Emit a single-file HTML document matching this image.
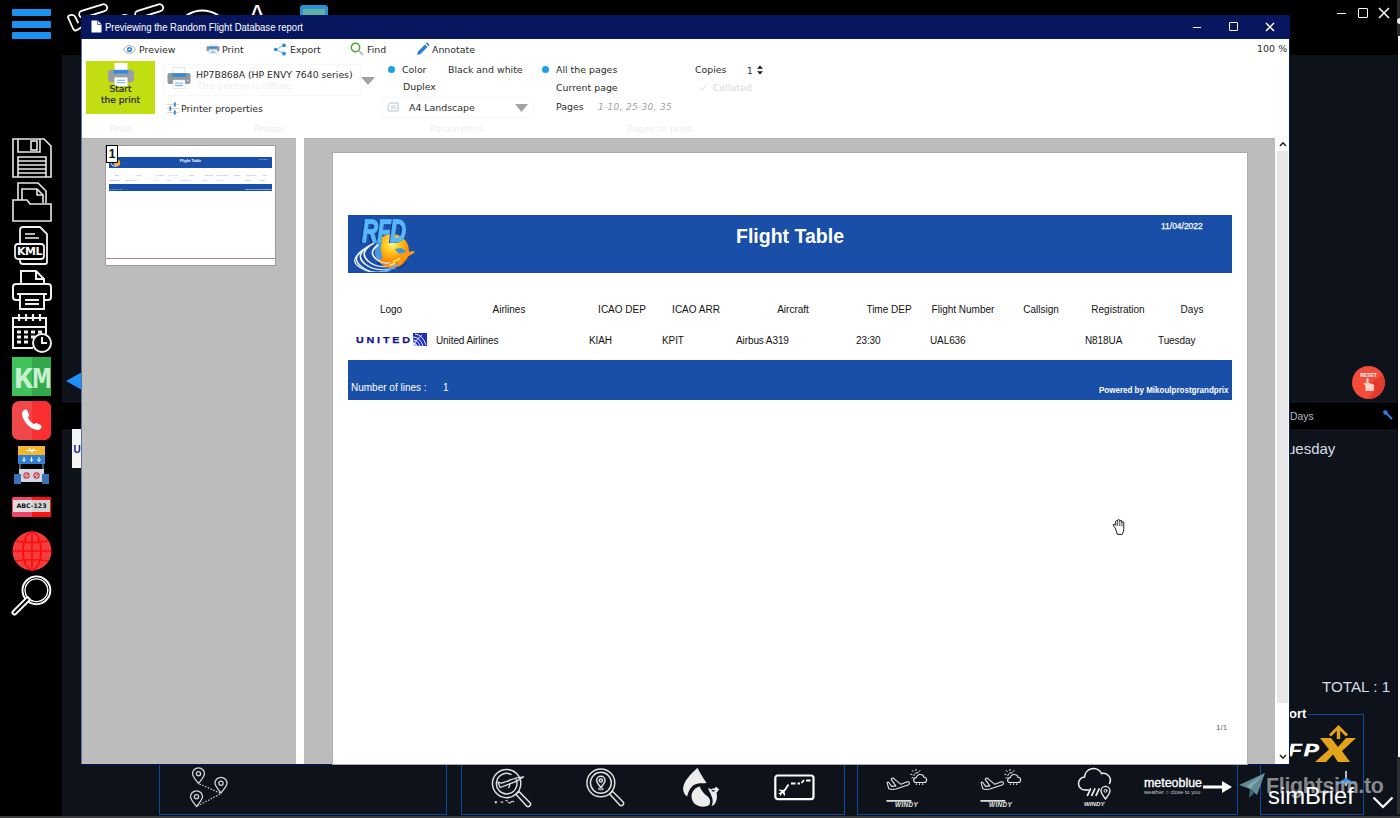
<!DOCTYPE html>
<html><head><meta charset="utf-8"><title>Previewing the Random Flight Database report</title>
<style>
*{margin:0;padding:0;box-sizing:border-box}
html,body{width:1400px;height:818px;overflow:hidden;background:#000}
body{position:relative;font-family:"Liberation Sans",sans-serif}
.abs,#app div,#app span,#app svg{position:absolute}
#app{position:absolute;left:0;top:0;width:1400px;height:818px;overflow:hidden;background:#000}
.navy{background:#0e121b}
.dv{margin-top:1px;font-family:"DejaVu Sans","Liberation Sans",sans-serif;font-size:9.400px;color:#2c2c2c;white-space:nowrap;line-height:12px}
.ar{font-family:"Liberation Sans",sans-serif;font-size:10px;color:#111;white-space:nowrap;line-height:12px}
.hd{top:151px;transform:translateX(-50%)}
.dt{top:182px;font-size:10px;letter-spacing:-.1px}
.gl{top:107px;color:#eee}
.dot{width:7px;height:7px;border-radius:50%;background:#1b9fe6}
.windy{font:italic bold 6.400px/8px "Liberation Sans",sans-serif;color:#e8e8e8;letter-spacing:.35px}
.grp{border:1px solid #0f4a9c;border-top:none}
</style></head><body><div id="app">
<!-- main dark area -->
<div class="navy" style="left:62px;top:55px;width:1338px;height:763px"></div>
<div style="left:0;top:816px;width:1400px;height:2px;background:#3c3c3c"></div>
<!-- ===== SIDEBAR ===== -->
<div style="left:12px;top:9px;width:39px;height:7px;background:#1e90f0;border-radius:1px"></div>
<div style="left:12px;top:21px;width:39px;height:7px;background:#1e90f0;border-radius:1px"></div>
<div style="left:12px;top:32px;width:39px;height:7px;background:#1e90f0;border-radius:1px"></div>
<!-- floppy -->
<svg style="left:12px;top:138px" width="40" height="40" viewBox="0 0 40 40" fill="none" stroke="#e8e8e8" stroke-width="1.6"><path d="M1 1h31l7 7v31H1z"/><path d="M6 1v13h22V1"/><rect x="19" y="3" width="6" height="9"/><path d="M6 39V19h28v20M6 23h28M6 27h28M6 31h28M6 35h28"/></svg>
<!-- folder -->
<svg style="left:12px;top:182px" width="40" height="40" viewBox="0 0 40 40" fill="none" stroke="#e8e8e8" stroke-width="1.6"><path d="M6 18V1h20l8 8v12"/><path d="M10 18V7h15l6 6v8"/><path d="M25 7v6h6"/><path d="M1 18h14l3 4h21v17H1z"/></svg>
<!-- KML -->
<svg style="left:14px;top:226px" width="36" height="39" viewBox="0 0 36 39" fill="none" stroke="#f0f0f0" stroke-width="1.8"><path d="M6 17V4q0-3 3-3h17l7 7v28q0 2-2 2H9q-3 0-3-3v-3"/><path d="M11 8h10M11 12h14" stroke-width="1.4"/><rect x="1" y="18" width="29" height="15" rx="3"/></svg>
<span style="left:17px;top:246px;font:bold 11px/12px 'DejaVu Sans','Liberation Sans',sans-serif;color:#fff;letter-spacing:-.5px" id="kml">KML</span>
<!-- printer -->
<svg style="left:12px;top:270px" width="40" height="40" viewBox="0 0 40 40" fill="none" stroke="#f0f0f0" stroke-width="2"><path d="M9 14V1h15l8 8v5"/><path d="M24 1v8h8"/><path d="M8 30H4q-3 0-3-3V17q0-3 3-3h32q3 0 3 3v10q0 3-3 3h-4"/><path d="M8 24h24v15H8zM5 24h30M13 30h14M13 34h14"/></svg>
<!-- calendar -->
<svg style="left:12px;top:313px" width="40" height="40" viewBox="0 0 40 40" fill="none" stroke="#f0f0f0" stroke-width="2"><path d="M1 5h33v9H1zM1 14v21h20M34 14v8"/><path d="M7 1v7M14 1v7M21 1v7M28 1v7" stroke-width="2.2"/><path d="M5 19h4M12 19h4M19 19h4M26 19h4M5 24h4M12 24h4M19 24h4M5 29h4M12 29h4" stroke-width="3"/><circle cx="30" cy="30" r="9" fill="#000"/><path d="M30 24v6h5"/></svg>
<!-- KM green -->
<div style="left:12px;top:357px;width:39px;height:39px;background:#3fc25a"></div>
<div style="left:32px;top:357px;width:19px;height:39px;background:#33a84b"></div>
<span id="km" style="left:14px;top:362px;font:bold 29.700px/36px 'Liberation Mono','Liberation Sans',monospace;color:#c6f0cf;letter-spacing:-1px;transform:scaleX(1.080);transform-origin:0 0;white-space:nowrap">KM</span>
<!-- phone -->
<div style="left:12px;top:401px;width:39px;height:39px;background:#f0484a;border-radius:7px"></div>
<div style="left:32px;top:401px;width:19px;height:39px;background:#fa2f2f;border-radius:0 7px 7px 0"></div>
<svg style="left:19px;top:408px" width="25" height="25" viewBox="0 0 25 25"><path d="M5 2c1.500-1 3-.5 3.500.8l1.500 4c.3 1-.2 1.800-1.200 2.500 1 3 3.500 5.500 6.500 7 .8-1 1.800-1.500 2.800-1l3.500 1.800c1.200.6 1.200 2 .4 3.200-1.500 2.200-4 2.200-7 1C9 18.500 4.500 13 3.200 7.500 2.700 5 3.500 3 5 2z" fill="#fff"/></svg>
<!-- gate -->
<div style="left:18px;top:446px;width:27px;height:9px;background:#f3b72e"></div>
<div style="left:18px;top:455px;width:27px;height:9px;background:#2f7fd3"></div>
<div style="left:19px;top:464px;width:2px;height:8px;background:#4a5568"></div><div style="left:42px;top:464px;width:2px;height:8px;background:#4a5568"></div>
<div style="left:19px;top:469px;width:25px;height:13px;background:#cfd8e3"></div>
<div style="left:14px;top:474px;width:7px;height:10px;background:#3a72b8"></div><div style="left:42px;top:474px;width:7px;height:10px;background:#3a72b8"></div>
<svg style="left:18px;top:446px" width="27" height="38" viewBox="0 0 27 38"><path d="M8 4.500h11M11 2l4 4.500M16 3l-3 3" stroke="#fff" stroke-width="1.100" fill="none"/><path d="M6 11v4M13.500 11v4M21 11v4M4.500 13.500l1.500 2 1.500-2M12 13.500l1.500 2 1.500-2M19.500 13.500l1.500 2 1.500-2" stroke="#fff" stroke-width="1" fill="none"/><circle cx="8.500" cy="29.500" r="2.600" fill="none" stroke="#e0343a" stroke-width="1.200"/><circle cx="18.500" cy="29.500" r="2.600" fill="none" stroke="#e0343a" stroke-width="1.200"/><path d="M6.800 31.200l3.400-3.400M16.800 31.200l3.400-3.400" stroke="#e0343a" stroke-width="1"/></svg>
<!-- ABC-123 -->
<div style="left:12px;top:497px;width:39px;height:20px;background:#f2456c;border-radius:1.500px"></div>
<div style="left:32px;top:497px;width:19px;height:20px;background:#ff1212;border-radius:0 1.500px 1.500px 0"></div>
<div style="left:13px;top:500px;width:37px;height:12px;background:#dedede"></div>
<div style="left:32px;top:500px;width:18px;height:12px;background:#d2d2d2"></div>
<span style="left:12px;top:500px;width:39px;text-align:center;font:bold 6.300px/12px 'DejaVu Sans','Liberation Sans',sans-serif;color:#111">ABC-123</span>
<!-- globe -->
<svg style="left:12px;top:531px" width="40" height="40" viewBox="0 0 40 40"><circle cx="20" cy="20" r="19.500" fill="#f33c3c"/><g fill="none" stroke="#ff0d0d" stroke-width="1.700"><ellipse cx="20" cy="20" rx="9" ry="19"/><path d="M20 1v38M1 20h38M4 10q16 3 32 0M4 30q16-3 32 0"/></g></svg>
<!-- magnifier -->
<svg style="left:11px;top:574px" width="42" height="42" viewBox="0 0 42 42" fill="none"><circle cx="25.400" cy="16.300" r="12.800" stroke="#fff" stroke-width="4.200"/><circle cx="25.400" cy="16.300" r="12.600" stroke="#000" stroke-width="1"/><path d="M16.500 25.500L3.500 38.500" stroke="#fff" stroke-width="6" stroke-linecap="round"/><path d="M16.500 25.500L3.500 38.500" stroke="#000" stroke-width="2" stroke-linecap="round"/></svg>
<!-- ===== UNDERLAY APP ===== -->
<!-- top toolbar icons (peeking above dialog) -->
<svg style="left:62px;top:0px" width="170" height="40" viewBox="0 0 170 40" fill="none" stroke="#fff" stroke-width="1.800" stroke-linecap="round" stroke-linejoin="round"><g transform="rotate(-17 31 10.500)"><rect x="16.500" y="7.500" width="29" height="7" rx="3.500"/></g><path d="M7 15.500q4-1.500 6 1l3 6M7 15.500q-1.500 1-.5 3l4.500 10q1.500 3 4 1.500l4-2.500"/><g transform="rotate(-17 87 10.500)"><rect x="72.500" y="7.500" width="29" height="7" rx="3.500"/></g><path d="M60 15.500q3-1.500 6 .5"/><path d="M125 15q15-9 31 0"/></svg>
<span style="left:248px;top:0px;font:300 27px/30px 'Liberation Sans',sans-serif;color:#fff">A</span>
<div style="left:300px;top:5px;width:28px;height:12px;background:#2d8fd6;border-radius:3px 3px 0 0"></div>
<div style="left:303px;top:9px;width:22px;height:7px;background:#5fb1a6"></div>
<!-- app window controls -->
<div style="left:1337px;top:13px;width:9px;height:1px;background:#fff"></div>
<div style="left:1358px;top:8px;width:10px;height:10px;border:1.500px solid #fff;border-radius:1px"></div>
<svg style="left:1378px;top:7px" width="12" height="12" viewBox="0 0 12 12"><path d="M1 1l10 10M11 1L1 11" stroke="#fff" stroke-width="1.500"/></svg>
<div style="left:1397px;top:0;width:3px;height:36px;background:#2b2b2b"></div><div style="left:1397px;top:18px;width:3px;height:6px;background:#eee;border-radius:3px 0 0 3px"></div><div style="left:1398px;top:36px;width:2px;height:721px;background:#fff"></div><div style="left:1397px;top:757px;width:3px;height:57px;background:#2e2e2e"></div>
<!-- left peek -->
<div style="left:62px;top:403px;width:20px;height:26px;background:#000"></div>
<svg style="left:66px;top:372px" width="16" height="18" viewBox="0 0 16 18"><path d="M16 0v18L0 9z" fill="#1e8ff5"/></svg>
<div style="left:72px;top:429px;width:9px;height:39px;background:#f4f4f4"></div>
<span style="left:73.500px;top:444px;font:bold 10px/11px 'Liberation Sans',sans-serif;color:#10209a">U</span>
<!-- right peek -->
<div style="left:1289px;top:403px;width:109px;height:26px;background:#000"></div>
<span style="left:1290px;top:410px;font:10.400px/14px 'Liberation Sans',sans-serif;color:#b4bac2">Days</span>
<svg style="left:1383px;top:410px" width="10" height="10" viewBox="0 0 10 10"><path d="M1.500 1.500l7 7" stroke="#2d7fe0" stroke-width="2" stroke-linecap="round"/><circle cx="2.500" cy="2.500" r="2.200" fill="#2d7fe0"/></svg>
<span style="left:1287px;top:440px;font:15px/18px 'Liberation Sans',sans-serif;color:#d8dde4">uesday</span>
<span style="left:1322px;top:677px;font:15.200px/20px 'Liberation Sans',sans-serif;color:#d8dde4" id="tot">TOTAL : 1</span>

<!-- reset button -->
<svg style="left:1352px;top:366px" width="33" height="33" viewBox="0 0 33 33"><circle cx="16.500" cy="16.500" r="16.500" fill="#f44c3a"/><path d="M16 33a16.500 16.500 0 0 0 15-24L20 16l3 8z" fill="#e23a2c"/><path d="M13.500 25v-5l-2-2.500 1.500-1 1.500 1.500V12.500q1-1.200 2 0V17l4.500 1.200q1.500.6 1.200 2.300l-.8 4.500z" fill="#fbd3cd"/></svg>
<span style="left:1352px;top:372px;width:33px;text-align:center;font:bold 5px/6px 'Liberation Sans',sans-serif;color:#fff">RESET</span>
<!-- ===== BOTTOM BAR ===== -->
<div class="grp" style="left:159px;top:700px;width:288px;height:115px"></div>
<div class="grp" style="left:461px;top:700px;width:384px;height:115px"></div>
<div class="grp" style="left:857px;top:700px;width:381px;height:115px"></div>
<div style="left:1260px;top:714px;width:104px;height:101px;border:1px solid #0f4a9c"></div>
<span style="left:1289px;top:706px;width:19px;font:bold 13px/16px 'Liberation Sans',sans-serif;color:#fff;background:#0e121b">ort</span>
<!-- route pins -->
<svg style="left:188px;top:766px" width="44" height="44" viewBox="0 0 44 44" fill="none" stroke="#d4d4d4" stroke-width="1.300"><path d="M10.500 17.500C6 12 4.500 10.300 4.500 7.800a6 6 0 0 1 12 0c0 2.500-1.500 4.200-6 9.700z"/><circle cx="10.500" cy="7.800" r="2.100"/><path d="M33 27c-4.500-5.500-6-7.200-6-9.700a6 6 0 0 1 12 0c0 2.500-1.500 4.200-6 9.700z"/><circle cx="33" cy="17.300" r="2.100"/><path d="M8.500 40.500c-4.500-5.500-6-7.200-6-9.700a6 6 0 0 1 12 0c0 2.500-1.500 4.200-6 9.700z"/><circle cx="8.500" cy="30.800" r="2.100"/><path d="M11.500 18L32 27M32 28L9.500 40" stroke-dasharray="1.600 1.400" stroke-width="1.100"/></svg>
<!-- magnifier + plane -->
<svg style="left:490px;top:767px" width="43" height="41" viewBox="0 0 44 42" fill="none" stroke="#e0e0e0" stroke-width="1.500"><circle cx="17" cy="17" r="14.500"/><path d="M26.500 12.500A10.500 10.500 0 1 1 22 7.800"/><path d="M26.500 28l3-3 11.500 11.500q1.500 2-.5 3.500t-3.500-.5z"/><path d="M8 15.500l2.500 5.500 17-6.500 7-4.500-8.500 1.500-14 5zM18 15l3.500-2.500M20.500 18l-1.500 3.500" stroke-width="1.300" stroke-linejoin="round"/><path d="M5 37l1.800-1.800M5 35.200l1.800 1.800M11 36h2.500M16 34.500h2M18.500 36q1.500 1.800 3 0t3 0" stroke-width="1.200"/></svg>
<!-- magnifier + pin -->
<svg style="left:585px;top:768px" width="41" height="39" viewBox="0 0 44 42" fill="none" stroke="#e0e0e0" stroke-width="1.600"><circle cx="17" cy="16" r="15"/><circle cx="17" cy="16" r="11.300"/><path d="M26.500 28l3-3 11.500 11.500q1.500 2-.5 3.500t-3.500-.5z"/><path d="M17 21c-3.500-4-4.500-5.500-4.500-7.500a4.500 4.500 0 0 1 9 0c0 2-1 3.500-4.500 7.500z"/><circle cx="17" cy="13.500" r="1.700"/><ellipse cx="17" cy="22.500" rx="3" ry="1" stroke-width="1"/></svg>
<!-- fox -->
<svg style="left:682px;top:766px" width="40" height="42" viewBox="0 0 40 42"><path d="M15.400 1.700C17 5 20 10 24.600 17.100C22 17.500 14 16 10 20.500C7 24 6 27 5.100 30.500C2.500 29 1 25 1.100 22.300C1.500 15 9 8 15.400 1.700z" fill="#ececec"/><path d="M17.700 20.600C19 24 21 27 25 30C28 32 29 35 27.500 38.500C25 41.500 17 41.500 12.600 37.700C9 34 8.500 28 11.500 24.500C13.500 22 15.500 21 17.700 20.600z" fill="#ececec"/><path d="M26.300 21.700L29 23.300Q31 22.500 33 22.300L34 20.400L37.100 23.600Q36 25.500 34.500 26.500Q36 32 33.100 37.500Q31.500 39.500 29.500 40Q31.500 36 30 31.500Q28.500 27 27.500 25.500Q26.500 24 26.300 21.700z" fill="#ececec"/><path d="M29 24.800l2-.9 2.300.5-1.600 1.300z" fill="#0e121b"/></svg>
<!-- boarding pass -->
<svg style="left:774px;top:774px" width="41" height="27" viewBox="0 0 41 27" fill="none"><rect x="1.300" y="1.500" width="38.200" height="23.600" rx="2.500" stroke="#fff" stroke-width="2.200"/><path d="M11.500 15l3-4.500" stroke="#fff" stroke-width="1.800"/><path d="M17 9.500h4.500M23.500 9.500h2.500M27.500 9l2.500-3M32 6.500h4.500" stroke="#fff" stroke-width="1.800"/><path d="M5.500 15.500l3.500.6 2.500-1.800.9.900-1.800 2.500.6 3.500-1 .5-1.500-2.600-1.500 1.200v1.200l-.8.300-.5-1.500-1.500-.5.300-.8h1.200l1.200-1.500-2.600-1.500z" fill="#fff"/></svg>
<!-- WINDY planes -->
<svg style="left:884px;top:766px" width="46" height="44" viewBox="0 0 46 44" fill="none" stroke="#e6e6e6" stroke-width="1.200" stroke-linejoin="round" stroke-linecap="round"><path transform="translate(.2 2.200) scale(.9)" d="M3.200 15.800q1.300-.8 2.200.4l2.800 4 4.800-.6-5-6.600q-.6-1.300.8-1.800t2.300.7l7.400 6 6.500-2.700q2.500-.7 3 .8t-1.500 2.600L13 23.200q-5.500 1.200-8-.6z"/><path transform="translate(3.300 1.400) scale(.93)" d="M31.500 16.300q-3.200 0-3.200-2.600t3-2.700q.6-3.400 4-3.400t4.200 3q2.800.2 2.800 2.900t-3 2.800z" fill="#0e121b"/><path d="M29.800 9.600a3.300 3.300 0 0 1 4.500-2.800" stroke-width="1"/><path d="M32 3.300v1.300M28.300 4.500l.8 1M36 4.500l-.8 1M26.800 8.300l1.200.3M28 12l1-.5" stroke-width="1"/><path d="M32.300 17.800v.6M35.500 17.800v.6M38.700 17.800v.6" stroke-width="1.100"/><path d="M2.400 34.900h25" stroke-width="1.700" stroke-linecap="butt"/></svg>
<span class="windy" style="left:895px;top:801px">WINDY</span>
<svg style="left:978px;top:766px" width="46" height="44" viewBox="0 0 46 44" fill="none" stroke="#e6e6e6" stroke-width="1.200" stroke-linejoin="round" stroke-linecap="round"><path transform="translate(.2 2.200) scale(.9)" d="M3.200 15.800q1.300-.8 2.200.4l2.800 4 4.800-.6-5-6.600q-.6-1.300.8-1.800t2.300.7l7.400 6 6.500-2.700q2.500-.7 3 .8t-1.500 2.600L13 23.200q-5.500 1.200-8-.6z"/><path transform="translate(3.300 1.400) scale(.93)" d="M31.500 16.300q-3.200 0-3.200-2.600t3-2.700q.6-3.400 4-3.400t4.200 3q2.800.2 2.800 2.900t-3 2.800z" fill="#0e121b"/><path d="M29.800 9.600a3.300 3.300 0 0 1 4.500-2.800" stroke-width="1"/><path d="M32 3.300v1.300M28.300 4.500l.8 1M36 4.500l-.8 1M26.800 8.300l1.200.3M28 12l1-.5" stroke-width="1"/><path d="M32.300 17.800v.6M35.500 17.800v.6M38.700 17.800v.6" stroke-width="1.100"/><path d="M2.400 34.900h25" stroke-width="1.700" stroke-linecap="butt"/></svg>
<span class="windy" style="left:989px;top:801px">WINDY</span>
<!-- cloud rain pin -->
<svg style="left:1076px;top:766px" width="38" height="36" viewBox="0 0 38 36" fill="none" stroke="#f2f2f2" stroke-width="1.500" stroke-linecap="round"><path d="M12.500 24H9.500A6.500 6.500 0 0 1 8.500 11A9 9 0 0 1 25.500 7.500A7 7 0 0 1 33.500 17.500"/><path d="M14.500 23l-3 6.300M18.800 23l-3 6.300M23.100 23l-3 6.300" stroke-width="1.700"/><path d="M29.500 33C26 28.500 25 27 25 24.800a4.500 4.500 0 0 1 9 0c0 2.200-1 3.700-4.500 8.200z" stroke-width="1.300"/><circle cx="29.500" cy="24.800" r="1.500" stroke-width="1"/></svg>
<span class="windy" style="left:1084px;top:800px;font-size:6.200px;letter-spacing:0">WINDY</span>
<!-- meteoblue -->
<span style="left:1144px;top:776px;font:12.600px/15px 'Liberation Sans',sans-serif;color:#fff;transform:scaleX(.985);transform-origin:0 0;-webkit-text-stroke:.35px #fff" id="mb">meteoblue</span>
<span style="left:1144px;top:789px;font:5.600px/7px 'Liberation Sans',sans-serif;color:#c8c8c8;white-space:nowrap" id="mbs">weather &#9675; close to you</span>
<svg style="left:1203px;top:781px" width="29" height="12" viewBox="0 0 29 12"><path d="M0 4.500h19V0l10 6-10 6V7.500H0z" fill="#fff"/></svg>
<!-- FPX -->
<span style="left:1288px;top:741px;font:italic bold 17px/20px 'Liberation Sans',sans-serif;color:#fff;letter-spacing:1.500px;transform:scaleX(1.330);transform-origin:0 0;-webkit-text-stroke:.4px #fff" id="fp">FP</span>
<svg style="left:1310px;top:720px" width="50" height="46" viewBox="1310 720 50 46"><path d="M1320 738h11l7 9 8-9h10l-14 13 8 11h-12l-5-7.500-7 7.500h-11l14-12.500z" fill="#e3a41c"/><path d="M1338.500 739v-11" stroke="#e3a41c" stroke-width="3.400"/><path d="M1330 735.500l8.500-8.500 8.500 8.500" stroke="#e3a41c" stroke-width="3" fill="none"/></svg>
<!-- small plane -->
<svg style="left:1334px;top:770px" width="24" height="20" viewBox="0 0 24 20"><path d="M12 1v15" stroke="#fff" stroke-width="1.400"/><path d="M12 8L2 13.500v1.500l10-2.500 10 2.500v-1.500z" fill="#2d8ff0"/></svg>
<!-- flightsim.to watermark -->
<svg style="left:1239px;top:773px" width="26" height="25" viewBox="0 0 26 25"><path d="M0 12L26 0l-8 22-7-6z" fill="#5f8a92"/><path d="M11 16l-1 9 5-5z" fill="#3f6a78"/><path d="M11 16L26 0 8 13z" fill="#7fa8ad"/></svg>
<span style="left:1266px;top:772px;font:bold 21.400px/28px 'Liberation Sans',sans-serif;color:rgba(170,170,170,.8);letter-spacing:-.3px;white-space:nowrap" id="fs">Flightsim.to</span>
<!-- simBrief -->
<span style="left:1268px;top:781px;font:23.800px/30px 'Liberation Sans',sans-serif;color:#fff;white-space:nowrap" id="sb">simBrief</span>
<!-- chevron -->
<svg style="left:1372px;top:796px" width="22" height="13" viewBox="0 0 22 13"><path d="M1.500 1.500l9.500 9.500 9.500-9.500" stroke="#fff" stroke-width="2.200" fill="none"/></svg>
<!-- ===== DIALOG ===== -->
<div id="dlg" style="left:81px;top:15px;width:1209px;height:750px;background:#fff;overflow:hidden;box-shadow:inset -1px -1px 0 #07165f, inset 1px 0 0 #5f6f9c">
 <div style="left:0;top:0;width:1209px;height:24px;background:#07165f"></div>
 <svg style="left:10px;top:5px" width="11" height="13" viewBox="0 0 11 13"><path d="M0.5 0.5h6l4 4v8h-10z" fill="#fff"/><path d="M6.5 0.5v4h4" fill="#dfe6f5" stroke="#07165f" stroke-width=".6"/></svg>
 <span style="left:24px;top:5px;font:11.500px/14px 'Liberation Sans',sans-serif;color:#fff;white-space:nowrap;transform:scaleX(.828);transform-origin:0 0" id="ttl">Previewing the Random Flight Database report</span>
 <!-- window controls -->
 <div style="left:1112px;top:12px;width:8px;height:1px;background:#fff"></div>
 <div style="left:1148px;top:7px;width:9px;height:9px;border:1.5px solid #fff;border-radius:1px"></div>
 <svg style="left:1184px;top:7px" width="10" height="10" viewBox="0 0 10 10"><path d="M1 1l8 8M9 1l-8 8" stroke="#fff" stroke-width="1.5"/></svg>
 <span class="dv" style="left:1176px;top:27px;font-size:9.5px">100 %</span>
 <!-- ===== TABS (coords relative to dialog: abs x-81, abs y-15) ===== -->
 <svg style="left:42px;top:30px" width="13" height="9" viewBox="0 0 13 9"><path d="M.5 4.5C2.5 1.5 4.5.7 6.5.7s4 .8 6 3.8c-2 3-4 3.8-6 3.8s-4-.8-6-3.8z" fill="#fff" stroke="#9aa0a8" stroke-width=".9"/><circle cx="6.5" cy="4.5" r="2.6" fill="#2b8be0"/><circle cx="6.5" cy="4.5" r="1" fill="#fff"/></svg>
 <span class="dv" style="left:58px;top:28px">Preview</span>
 <svg style="left:125px;top:29px" width="14" height="10" viewBox="0 0 14 11" preserveAspectRatio="none"><rect x="3.5" y="0" width="7" height="3" fill="#e8eef5"/><rect x=".5" y="2.5" width="13" height="5.5" rx="1" fill="#8d959e"/><rect x="3" y="3" width="8" height="1.6" fill="#2b8be0"/><rect x="3" y="6" width="8" height="5" fill="#fff" stroke="#9ec5ea" stroke-width=".5"/><path d="M4.5 8h5M4.5 9.5h5" stroke="#2b8be0" stroke-width=".6"/></svg>
 <span class="dv" style="left:141px;top:28px">Print</span>
 <svg style="left:192px;top:28px" width="14" height="13" viewBox="0 0 14 13"><path d="M3 6.500l7.500-4M3 6.500l7.500 4" stroke="#4a9be6" stroke-width=".8"/><circle cx="2.600" cy="6.500" r="1.800" fill="#2b8be0"/><circle cx="11" cy="2.300" r="1.900" fill="#2b8be0"/><circle cx="11" cy="10.700" r="1.900" fill="#2b8be0"/></svg>
 <span class="dv" style="left:209px;top:28px">Export</span>
 <svg style="left:269px;top:27px" width="14" height="14" viewBox="0 0 14 14"><circle cx="5.5" cy="5.5" r="4.2" fill="none" stroke="#44a62c" stroke-width="1.4"/><path d="M9 9l4 4" stroke="#b9bcc0" stroke-width="1.8"/></svg>
 <span class="dv" style="left:286px;top:28px">Find</span>
 <svg style="left:335px;top:27px" width="14" height="14" viewBox="0 0 14 14"><path d="M2 9.5l7-7 2.5 2.5-7 7L1 13z" fill="#2b7fd6"/><path d="M10 1.5l1-1 2.5 2.5-1 1z" fill="#1a5fb0"/></svg>
 <span class="dv" style="left:351px;top:28px">Annotate</span>
 <!-- ===== RIBBON ===== -->
 <div style="left:5px;top:46px;width:69px;height:53px;background:#c3dd13"></div>
 <svg style="left:26px;top:47px" width="28" height="25" viewBox="0 0 26 26" preserveAspectRatio="none"><rect x="7" y="1" width="12" height="8" fill="#fff"/><rect x="1" y="8" width="24" height="13" rx="2.5" fill="#9a9fa6"/><rect x="6" y="8.5" width="14" height="3.5" fill="#2b8be0"/><rect x="7" y="16" width="12" height="9" fill="#fff"/><path d="M9 19h8M9 21.5h8" stroke="#6bb0ec" stroke-width="1"/></svg>
 <span class="dv" style="left:5px;top:68px;width:69px;text-align:center;white-space:normal;line-height:10.700px;color:#1a1a1a;font-size:9.100px;-webkit-text-stroke:.2px #1a1a1a;margin-top:.8px">Start<br>the print</span>
 <!-- printer combo -->
 <div style="left:82px;top:49px;width:198px;height:32px;border:1px solid #f8f8f8"></div>
 <svg style="left:86px;top:52px" width="24" height="22" viewBox="0 0 24 22"><rect x="6" y="0.5" width="12" height="7" fill="#fff" stroke="#c8d6e6" stroke-width=".6"/><rect x=".5" y="6" width="23" height="11" rx="2" fill="#8f969e"/><rect x="5" y="6.5" width="14" height="3" fill="#2b8be0"/><rect x="6" y="13" width="12" height="8.5" fill="#fff" stroke="#c8d6e6" stroke-width=".6"/><path d="M8 16h8M8 18.5h8" stroke="#6bb0ec" stroke-width="1"/><circle cx="21" cy="13.5" r=".8" fill="#dfe3e8"/></svg>
 <span class="dv" style="left:115px;top:53px;letter-spacing:-.05px" id="hp">HP7B868A (HP ENVY 7640 series)</span>
 <span class="dv" style="left:116px;top:64px;color:#f0f0f0" id="off">The printer is offline</span>
 <svg style="left:280px;top:62px" width="14" height="8" viewBox="0 0 14 8"><path d="M0 0h14l-7 8z" fill="#a3a3a3"/></svg>
 <!-- printer properties -->
 <svg style="left:86px;top:87px" width="12" height="13" viewBox="0 0 12 13"><path d="M0 2.500h12M0 6.500h12M0 10.500h12" stroke="#e6bfa6" stroke-width=".7"/><rect x="6.800" y=".3" width="2" height="4.400" rx=".8" fill="#3a8ce0"/><rect x="2.300" y="4.300" width="2" height="4.400" rx=".8" fill="#3a8ce0"/><rect x="6.800" y="8.300" width="2" height="4.400" rx=".8" fill="#3a8ce0"/></svg>
 <span class="dv" style="left:100px;top:87px">Printer properties</span>
 <!-- group labels (faint) -->
 <span class="dv gl" style="left:29px">Print</span>
 <span class="dv gl" style="left:173px">Printer</span>
 <span class="dv gl" style="left:349px">Parameters</span>
 <span class="dv gl" style="left:546px">Pages to print</span>
 <!-- parameters -->
 <div class="dot" style="left:307px;top:51px"></div>
 <span class="dv" style="left:321px;top:48px">Color</span>
 <span class="dv" style="left:367px;top:48px">Black and white</span>
 <span class="dv" style="left:322px;top:65px">Duplex</span>
 <div style="left:301px;top:82px;width:152px;height:21px;border:1px solid #f8f8f8"></div>
 <svg style="left:306px;top:87px" width="12" height="10" viewBox="0 0 12 10"><path d="M1 3.5l2-2.5h8v8H1z" fill="#fff" stroke="#9fb3c8" stroke-width=".8"/><path d="M4 4h5M4 6h5" stroke="#9fb3c8" stroke-width=".7"/></svg>
 <span class="dv" style="left:328px;top:86px">A4 Landscape</span>
 <svg style="left:434px;top:89px" width="13" height="8" viewBox="0 0 13 8"><path d="M0 0h13l-6.500 8z" fill="#a3a3a3"/></svg>
 <!-- pages -->
 <div class="dot" style="left:461px;top:51px"></div>
 <span class="dv" style="left:475px;top:48px">All the pages</span>
 <span class="dv" style="left:475px;top:66px">Current page</span>
 <span class="dv" style="left:475px;top:85px">Pages</span>
 <span class="dv" style="left:517px;top:85px;font-style:italic;color:#a0a0a0;letter-spacing:.3px;font-size:9px">1-10, 25-30, 35</span>
 <!-- copies -->
 <span class="dv" style="left:614px;top:48px">Copies</span>
 <span class="dv" style="left:666px;top:49px;font-size:9px">1</span>
 <svg style="left:676px;top:50px" width="6" height="10" viewBox="0 0 7 12"><path d="M0 4.500L3.500 0.500 7 4.500zM0 7.500l3.500 4 3.500-4z" fill="#111"/></svg>
 <svg style="left:618px;top:68px" width="9" height="8" viewBox="0 0 9 8"><path d="M1 4.500l2 2.500 5-6" stroke="#dcdcdc" stroke-width="1" fill="none"/></svg>
 <span class="dv" style="left:632px;top:66px;color:#d9d9d9">Collated</span>
 <!-- gray workspace -->
 <div style="left:1px;top:123px;width:214px;height:626px;background:#bcbcbc;border-top:1px solid #aeaeae"></div>
 <div style="left:223px;top:123px;width:971px;height:626px;background:#bcbcbc;border-top:1px solid #aeaeae"></div>
 <!-- scrollbar -->
 
 <div style="left:1196px;top:136px;width:11px;height:552px;background:#e8e8e8"></div>
 <svg style="left:1198px;top:126px" width="8" height="6" viewBox="0 0 8 6"><path d="M1 5l3-3.200L7 5" stroke="#222" stroke-width="1.600" fill="none"/></svg>
 <svg style="left:1198px;top:739px" width="8" height="6" viewBox="0 0 8 6"><path d="M1 1l3 3.200L7 1" stroke="#222" stroke-width="1.600" fill="none"/></svg>
 <!-- ===== THUMBNAIL (dialog coords) ===== -->
 <div style="left:24px;top:130px;width:171px;height:121px;background:#9c9c9c"></div>
 <div style="left:25px;top:131px;width:169px;height:119px;background:#fff;overflow:hidden">
  <div style="left:0;top:112px;width:169px;height:1px;background:#b08080"></div>
  <div style="left:3px;top:11px;width:163px;height:11px;background:#194fa9"></div>
  <div style="left:3px;top:38px;width:163px;height:7px;background:#194fa9"></div>
  <svg style="left:4px;top:11px" width="12" height="11" viewBox="0 0 12 11"><circle cx="7" cy="6" r="3.200" fill="#ffb11a"/><path d="M1 6q1 4 6 3" stroke="#cfe8ff" stroke-width="1" fill="none"/><path d="M2 2h5" stroke="#4db2fb" stroke-width="1.500"/></svg>
  <span style="left:0;top:0;width:914px;height:646px;transform:scale(.1849);transform-origin:0 0;display:block">
   <span style="left:15px;top:66px;width:884px;text-align:center;font:bold 21px/26px 'Liberation Sans',sans-serif;color:#fff">Flight Table</span>
   <span style="left:828px;top:68px;font:9px/11px 'Liberation Sans',sans-serif;color:#dde">11/04/2022</span>
   <span class="ar hd" style="left:58px;color:#999">Logo</span><span class="ar hd" style="left:176px;color:#999">Airlines</span><span class="ar hd" style="left:289px;color:#999">ICAO DEP</span><span class="ar hd" style="left:363px;color:#999">ICAO ARR</span><span class="ar hd" style="left:460px;color:#999">Aircraft</span><span class="ar hd" style="left:556px;color:#999">Time DEP</span><span class="ar hd" style="left:630px;color:#999">Flight Number</span><span class="ar hd" style="left:708px;color:#999">Callsign</span><span class="ar hd" style="left:785px;color:#999">Registration</span><span class="ar hd" style="left:859px;color:#999">Days</span>
   <span class="ar dt" style="left:23px;color:#5560c0;font-weight:bold;letter-spacing:2px">UNITED</span><span class="ar dt" style="left:103px;color:#888">United Airlines</span><span class="ar dt" style="left:256px;color:#999">KIAH</span><span class="ar dt" style="left:329px;color:#999">KPIT</span><span class="ar dt" style="left:403px;color:#999">Airbus A319</span><span class="ar dt" style="left:523px;color:#999">23:30</span><span class="ar dt" style="left:597px;color:#999">UAL636</span><span class="ar dt" style="left:752px;color:#999">N818UA</span><span class="ar dt" style="left:825px;color:#999">Tuesday</span>
   <span class="ar" style="left:18px;top:228px;color:#cdd8f0">Number of lines :&nbsp;&nbsp;&nbsp;&nbsp; 1</span>
   <span class="ar" style="right:18px;top:231px;color:#e8eeff;font-size:9px;font-weight:bold">Powered by Mikoulprostgrandprix</span>
  </span>
 </div>
 <div style="left:25px;top:130px;width:12px;height:18px;background:#fff;border:1.500px solid #000"></div>
 <span style="left:25px;top:132px;width:12px;text-align:center;font:bold 12px/14px 'Liberation Sans',sans-serif;color:#111">1</span>

 <!-- ===== PAGE ===== -->
 <div id="page" style="left:252px;top:138px;width:914px;height:611px;background:#fff;box-shadow:0 0 0 1px #adadad">
  <div style="left:15px;top:62px;width:884px;height:58px;background:#194fa9"></div>
  <span id="ft" style="left:15px;top:70px;width:884px;text-align:center;font:bold 19.500px/26px 'Liberation Sans',sans-serif;color:#fff">Flight Table</span>
  <span id="date" style="left:828px;top:67px;font:9px/12px 'Liberation Sans',sans-serif;color:#fff;transform:scaleX(.94);transform-origin:0 0;-webkit-text-stroke:.25px #fff">11/04/2022</span>
  <!-- RFD logo (page coords: abs x-333, abs y-153) -->
  <svg style="left:17px;top:63px" width="70" height="56" viewBox="0 0 70 56">
   <defs>
    <radialGradient id="gl" cx=".5" cy=".3" r=".8"><stop offset="0" stop-color="#fff68a"/><stop offset=".25" stop-color="#ffcf22"/><stop offset=".6" stop-color="#ff8f0a"/><stop offset="1" stop-color="#e66400"/></radialGradient>
    <linearGradient id="sw" x1="0" y1="0" x2="1" y2="0"><stop offset="0" stop-color="#ffffff"/><stop offset=".55" stop-color="#bfe2ff"/><stop offset="1" stop-color="#58aef5"/></linearGradient>
   </defs>
   <ellipse cx="42" cy="47" rx="15" ry="6" fill="#0f3f96"/>
   <circle cx="42" cy="35" r="17" fill="url(#gl)"/>
   <path d="M27 27a17 17 0 0 0 1 17l5-2q-4-8-1-16z" fill="#3d9be8"/>
   <path d="M45 33l6-1 5 3-3 3-5-1z" fill="#2f9be8"/>
   <g fill="none" stroke="url(#sw)" stroke-linecap="round">
    <path d="M24 27q-16 9-6 18t30 4" stroke-width="1.600"/>
    <path d="M19 30q-15 9-4 18t30 4" stroke-width="1.500"/>
    <path d="M14 33q-14 9-2 18t28 3" stroke-width="1.400"/>
    <path d="M10 37q-11 8 1 15t24 3" stroke-width="1.300"/>
    <path d="M28 29q-10 7-2 14t22 2" stroke-width="1.600"/>
   </g>
   <path d="M34 50l11-6 7-7 11-2 2 1.500-9 5-5 7-3 1 1-5-10 7z" fill="#ff9a10"/>
   <path d="M43 46l7-3.500M40 49l5-1.500" stroke="#ffe75a" stroke-width="1.500"/>
  </svg>
  <span id="rfd" style="left:29px;top:62px;font:italic bold 31px/34px 'Liberation Sans',sans-serif;color:#55b8ff;letter-spacing:-1px;transform:scaleX(.71);transform-origin:0 0;text-shadow:-2px 1px 0 #081d55;-webkit-text-stroke:1.300px #55b8ff">RFD</span>
  <!-- column headers: centers relative to page (abs x - 333) -->
  <span class="ar hd" style="left:58px">Logo</span>
  <span class="ar hd" style="left:176px">Airlines</span>
  <span class="ar hd" style="left:289px">ICAO DEP</span>
  <span class="ar hd" style="left:363px">ICAO ARR</span>
  <span class="ar hd" style="left:460px">Aircraft</span>
  <span class="ar hd" style="left:556px">Time DEP</span>
  <span class="ar hd" style="left:630px">Flight Number</span>
  <span class="ar hd" style="left:708px">Callsign</span>
  <span class="ar hd" style="left:785px">Registration</span>
  <span class="ar hd" style="left:859px">Days</span>
  <!-- data row -->
  <span id="utd" style="left:23px;top:181px;font:bold 8.800px/12px 'Liberation Sans',sans-serif;color:#14148c;letter-spacing:2.300px;transform:scaleX(1.220);-webkit-text-stroke:.25px #14148c;transform-origin:0 0">UNITED</span>
  <svg style="left:80px;top:180px" width="14" height="13" viewBox="0 0 14 13"><rect width="14" height="13" fill="#1c2fc4"/><g stroke="#fff" stroke-width=".9" fill="none"><path d="M0 4q7 0 10 9M0 7q5 0 7 6M0 10q3 0 4 3M2 1q8 1 11 11M0 13Q3 6 9 2"/></g><path d="M0 13V8l5 5z" fill="#fff" opacity=".6"/></svg>
  <span class="ar dt" style="left:103px">United Airlines</span>
  <span class="ar dt" style="left:256px">KIAH</span>
  <span class="ar dt" style="left:329px">KPIT</span>
  <span class="ar dt" style="left:403px">Airbus A319</span>
  <span class="ar dt" style="left:523px">23:30</span>
  <span class="ar dt" style="left:597px">UAL636</span>
  <span class="ar dt" style="left:752px">N818UA</span>
  <span class="ar dt" style="left:825px">Tuesday</span>
  <div style="left:15px;top:207px;width:884px;height:40px;background:#194fa9"></div>
  <span class="ar" style="left:18px;top:229px;color:#fff;font-size:10px">Number of lines :</span>
  <span class="ar" style="left:110px;top:229px;color:#fff;font-size:10px">1</span>
  <span class="ar" style="right:18px;top:231px;color:#fff;font-size:9px;font-weight:bold;transform:scaleX(.89);transform-origin:100% 0" id="pw">Powered by Mikoulprostgrandprix</span>
  <span class="ar" style="left:883px;top:569px;color:#666;font-size:8px" id="pn">1/1</span>
 </div>
 <!-- hand cursor -->
 <svg style="left:1030px;top:503px" width="18" height="18" viewBox="0 0 16 17"><path d="M3.500 9.500L2 7.500Q1 6 2.300 5.800 3.300 5.800 4 7V3q.8-1.200 1.800 0V2q.9-1.300 2 0v.8q1-1.200 2 0V4q1-1 1.800.2V10q0 3-1.500 5.500H5.500Q4.500 12 3.500 9.500z" fill="#fff" stroke="#111" stroke-width=".9" stroke-linejoin="round"/><path d="M5.800 3v4.500M7.800 2.500v5M9.800 3.500V8" stroke="#111" stroke-width=".7"/></svg>

</div>

</div></body></html>
